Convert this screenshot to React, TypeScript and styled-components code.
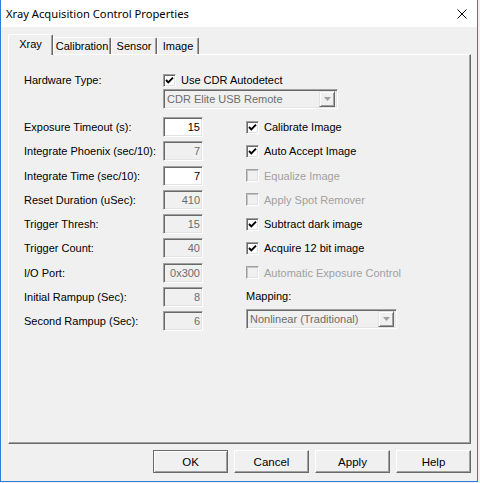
import React from "react";
import styled, { createGlobalStyle, css } from "styled-components";

const Global = createGlobalStyle`
  html, body { margin: 0; padding: 0; background: #f0f0f0; overflow: hidden; }
  * { box-sizing: border-box; }
`;

const UI_FONT = `"Liberation Sans", Arial, sans-serif`;

const Window = styled.div`
  width: 478px;
  height: 482px;
  background: #f0f0f0;
  border-left: 1px solid #2b7fd6;
  border-right: 1px solid #2b7fd6;
  border-bottom: 1px solid #2b7fd6;
  display: flex;
  flex-direction: column;
`;

const TitleBar = styled.div`
  height: 27px;
  background: #ffffff;
  display: flex;
  align-items: center;
  justify-content: space-between;
  padding-left: 5px;
  flex-shrink: 0;
`;

const Title = styled.span`
  font: 11.2px "Noto Sans", "Open Sans", sans-serif;
  color: #000;
  margin-top: -1px;
`;

const Close = styled.div`
  width: 10px;
  height: 10px;
  margin-right: 10px;
  margin-top: 1px;
  display: flex;
`;

const Body = styled.div`
  flex: 1;
  display: flex;
  flex-direction: column;
  padding: 7px 6px 0 7px;
`;

const TabStrip = styled.div`
  height: 20px;
  display: flex;
  align-items: flex-end;
  position: relative;
  z-index: 2;
`;

const Tab = styled.div<{ $active?: boolean; $w: number }>`
  width: ${(p) => p.$w}px;
  height: ${(p) => (p.$active ? 21 : 17)}px;
  margin-bottom: ${(p) => (p.$active ? -1 : 0)}px;
  background: #f0f0f0;
  border-top: 1px solid #ffffff;
  border-left: 1px solid #ffffff;
  border-right: 1px solid #696969;
  box-shadow: inset -1px 0 #a0a0a0;
  border-radius: 2px 2px 0 0;
  display: flex;
  align-items: center;
  justify-content: center;
  font: 11px ${UI_FONT};
  color: #000;
  padding-bottom: ${(p) => (p.$active ? 2 : 0)}px;
`;

const Panel = styled.div`
  width: 463px;
  height: 390px;
  border-top: 1px solid #ffffff;
  border-left: 1px solid #ffffff;
  border-right: 1px solid #696969;
  border-bottom: 1px solid #696969;
  box-shadow: inset -1px -1px #a0a0a0;
  padding: 17px 0 0 15px;
  display: flex;
  flex-direction: column;
`;

const HardwareRow = styled.div`
  height: 16px;
  display: flex;
  align-items: center;
`;

const Label = styled.span<{ $disabled?: boolean }>`
  font: 11px ${UI_FONT};
  color: ${(p) => (p.$disabled ? "#a0a0a0" : "#000")};
  white-space: nowrap;
`;

const LeftLabel = styled(Label)`
  width: 139px;
  flex-shrink: 0;
`;

const sunken = css`
  border: 1px solid;
  border-color: #a0a0a0 #ffffff #ffffff #a0a0a0;
  box-shadow: inset 1px 1px #696969, inset -1px -1px #e3e3e3;
`;

const CheckRow = styled.div`
  display: flex;
  align-items: center;
  gap: 5px;
`;

const Box = styled.div<{ $disabled?: boolean }>`
  width: 13px;
  height: 13px;
  flex-shrink: 0;
  ${sunken};
  background: ${(p) => (p.$disabled ? "#f0f0f0" : "#ffffff")};
  ${(p) =>
    p.$disabled &&
    css`
      box-shadow: inset 1px 1px #c4c4c4, inset -1px -1px #e3e3e3;
    `}
  display: flex;
  align-items: center;
  justify-content: center;
`;

const Select = styled.div<{ $w: number }>`
  width: ${(p) => p.$w}px;
  height: 20px;
  ${sunken};
  background: #f0f0f0;
  display: flex;
  align-items: center;
  justify-content: space-between;
  padding: 2px 2px 2px 3px;
  font: 11px ${UI_FONT};
  color: #6d6d6d;
`;

const ArrowBtn = styled.div`
  width: 16px;
  height: 16px;
  background: #f0f0f0;
  border: 1px solid;
  border-color: #e3e3e3 #696969 #696969 #e3e3e3;
  box-shadow: inset 1px 1px #ffffff, inset -1px -1px #a0a0a0;
  display: flex;
  align-items: center;
  justify-content: center;
`;

const TopSelect = styled(Select)`
  margin: 1px 0 0 139px;
`;

const Grid = styled.div`
  margin-top: 8px;
  display: grid;
  grid-template-columns: 139px 40px 43px 1fr;
  grid-template-rows: repeat(9, 20px);
  row-gap: 4.25px;
  align-items: center;
`;

const Field = styled.div<{ $disabled?: boolean; $row: number }>`
  grid-column: 2;
  grid-row: ${(p) => p.$row};
  width: 40px;
  height: 20px;
  ${sunken};
  background: ${(p) => (p.$disabled ? "#f0f0f0" : "#ffffff")};
  color: ${(p) => (p.$disabled ? "#6d6d6d" : "#000")};
  font: 11px ${UI_FONT};
  display: flex;
  align-items: center;
  justify-content: flex-end;
  padding-right: 2px;
`;

const GridLabel = styled(Label)<{ $row: number }>`
  grid-column: 1;
  grid-row: ${(p) => p.$row};
`;

const RightCell = styled.div<{ $row: number; $shift?: number }>`
  grid-column: 4;
  grid-row: ${(p) => p.$row};
  margin-top: ${(p) => p.$shift ?? 0}px;
`;

const Buttons = styled.div`
  margin-top: 6px;
  display: flex;
  justify-content: flex-end;
  gap: 6px;
`;

const Button = styled.div<{ $default?: boolean }>`
  width: 75px;
  height: 23px;
  background: #f0f0f0;
  font: 11.5px ${UI_FONT};
  color: #000;
  display: flex;
  align-items: center;
  justify-content: center;
  border: 1px solid;
  border-color: #ffffff #696969 #696969 #ffffff;
  box-shadow: inset -1px -1px #a0a0a0;
  ${(p) =>
    p.$default &&
    css`
      border-color: #696969;
      box-shadow: inset 1px 1px #ffffff, inset -1px -1px #a0a0a0;
    `}
`;

const Check = () => (
  <svg width="9" height="9" viewBox="0 0 9 9">
    <polyline points="1,4 3.3,6.4 8,1.6" fill="none" stroke="#000" strokeWidth="1.9" />
  </svg>
);

const Arrow = () => (
  <svg width="7" height="4" viewBox="0 0 7 4">
    <polygon points="0,0 7,0 3.5,4" fill="#a0a0a0" />
  </svg>
);

const CheckItem = ({ label, checked, disabled }: { label: string; checked?: boolean; disabled?: boolean }) => (
  <CheckRow>
    <Box $disabled={disabled}>{checked && <Check />}</Box>
    <Label $disabled={disabled}>{label}</Label>
  </CheckRow>
);

const fields: { label: string; value: string; disabled?: boolean }[] = [
  { label: "Exposure Timeout (s):", value: "15" },
  { label: "Integrate Phoenix (sec/10):", value: "7", disabled: true },
  { label: "Integrate Time (sec/10):", value: "7" },
  { label: "Reset Duration (uSec):", value: "410", disabled: true },
  { label: "Trigger Thresh:", value: "15", disabled: true },
  { label: "Trigger Count:", value: "40", disabled: true },
  { label: "I/O Port:", value: "0x300", disabled: true },
  { label: "Initial Rampup (Sec):", value: "8", disabled: true },
  { label: "Second Rampup (Sec):", value: "6", disabled: true },
];

const checks: { label: string; checked?: boolean; disabled?: boolean }[] = [
  { label: "Calibrate Image", checked: true },
  { label: "Auto Accept Image", checked: true },
  { label: "Equalize Image", disabled: true },
  { label: "Apply Spot Remover", disabled: true },
  { label: "Subtract dark image", checked: true },
  { label: "Acquire 12 bit image", checked: true },
  { label: "Automatic Exposure Control", disabled: true },
];

export default function App() {
  return (
    <>
      <Global />
      <Window>
        <TitleBar>
          <Title>Xray Acquisition Control Properties</Title>
          <Close>
            <svg width="10" height="10" viewBox="0 0 10 10">
              <path d="M0.5 0.5 L9.5 9.5 M9.5 0.5 L0.5 9.5" stroke="#000" strokeWidth="1" />
            </svg>
          </Close>
        </TitleBar>
        <Body>
          <TabStrip>
            <Tab $active $w={45}>Xray</Tab>
            <Tab $w={58}>Calibration</Tab>
            <Tab $w={46}>Sensor</Tab>
            <Tab $w={42}>Image</Tab>
          </TabStrip>
          <Panel>
            <HardwareRow>
              <LeftLabel>Hardware Type:</LeftLabel>
              <CheckItem label="Use CDR Autodetect" checked />
            </HardwareRow>
            <TopSelect $w={175}>
              <span>CDR Elite USB Remote</span>
              <ArrowBtn>
                <Arrow />
              </ArrowBtn>
            </TopSelect>
            <Grid>
              {fields.map((f, i) => (
                <React.Fragment key={f.label}>
                  <GridLabel $row={i + 1}>{f.label}</GridLabel>
                  <Field $row={i + 1} $disabled={f.disabled}>
                    {f.value}
                  </Field>
                </React.Fragment>
              ))}
              {checks.map((c, i) => (
                <RightCell key={c.label} $row={i + 1}>
                  <CheckItem label={c.label} checked={c.checked} disabled={c.disabled} />
                </RightCell>
              ))}
              <RightCell $row={8} $shift={-3}>
                <Label>Mapping:</Label>
              </RightCell>
              <RightCell $row={9} $shift={-4}>
                <Select $w={151}>
                  <span>Nonlinear (Traditional)</span>
                  <ArrowBtn>
                    <Arrow />
                  </ArrowBtn>
                </Select>
              </RightCell>
            </Grid>
          </Panel>
          <Buttons>
            <Button $default>OK</Button>
            <Button>Cancel</Button>
            <Button>Apply</Button>
            <Button>Help</Button>
          </Buttons>
        </Body>
      </Window>
    </>
  );
}
